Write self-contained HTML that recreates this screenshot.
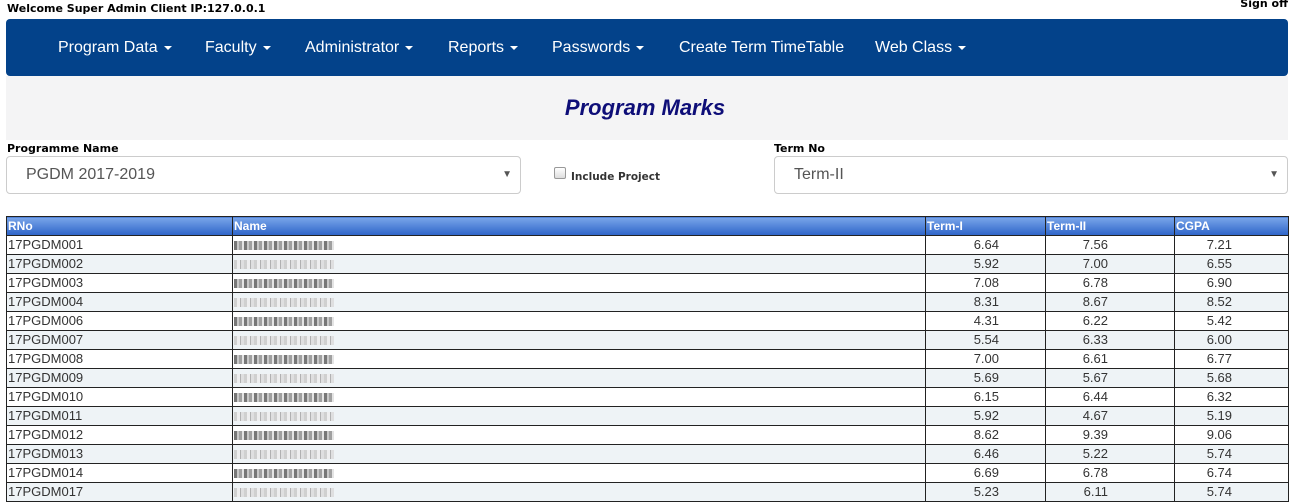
<!DOCTYPE html>
<html><head><meta charset="utf-8"><style>
*{margin:0;padding:0;box-sizing:border-box}
body{width:1296px;height:496px;overflow:hidden;background:#fff;font-family:"Liberation Sans",Arial,sans-serif;position:relative;color:#333}
.abs{position:absolute}
.welcome{left:7px;top:2px;font-family:"DejaVu Sans",sans-serif;font-weight:bold;font-size:11px;color:#000}
.sign{right:8px;top:-3px;font-family:"DejaVu Sans",sans-serif;font-weight:bold;font-size:11px;color:#000}
.nav{left:6px;top:19px;width:1282px;height:57px;background:#03428a;border-radius:4px}
.nav span{position:absolute;top:20px;color:#fff;font-size:16px;white-space:nowrap}
.caret{display:inline-block;width:0;height:0;border-left:4px solid transparent;border-right:4px solid transparent;border-top:4px solid #fff;vertical-align:middle;margin-left:6px}
.band{left:6px;top:76px;width:1282px;height:64px;background:#f4f4f5}
.title{left:0;width:1290px;top:95px;text-align:center;font-size:22px;font-weight:bold;font-style:italic;color:#0e0e78}
.lbl{font-family:"DejaVu Sans",sans-serif;font-weight:bold;font-size:11px;color:#000}
.sel{border:1px solid #ccc;border-radius:4px;height:38px;background:#fff;font-size:16px;color:#555;padding:9px 0 0 19px}
.sel:after{content:"▼";position:absolute;right:8px;top:12px;font-size:10px;color:#555}
table{position:absolute;left:6px;top:216px;border-collapse:collapse;font-size:13px}
td,th{border:1px solid #222;height:19px;padding:0 1px;line-height:16px;overflow:hidden}
th{background:linear-gradient(#7aa6ea,#2d64c8);color:#fff;text-align:left;font-weight:bold;font-size:12px}
tr:nth-child(odd) td{background:#eef3f6}
td.n{text-align:right}
td.a{padding-right:46px}
td.c{padding-right:66px}
td.d{padding-right:56px}
.b{display:inline-block;width:100px;height:9px;vertical-align:middle;background:repeating-linear-gradient(90deg,#555 0 3px,#bbb 3px 5px,#888 5px 8px,#ddd 8px 10px);opacity:.8}
.l{background:repeating-linear-gradient(90deg,#ccc 0 3px,#eee 3px 6px,#aaa 6px 7px,#ddd 7px 10px);opacity:.9}
</style></head><body>
<div class="abs welcome">Welcome Super Admin Client IP:127.0.0.1</div>
<div class="abs sign">Sign off</div>
<div class="abs nav">
<span style="left:52px">Program Data<i class="caret"></i></span>
<span style="left:199px">Faculty<i class="caret"></i></span>
<span style="left:299px">Administrator<i class="caret"></i></span>
<span style="left:442px">Reports<i class="caret"></i></span>
<span style="left:546px">Passwords<i class="caret"></i></span>
<span style="left:673px">Create Term TimeTable</span>
<span style="left:869px">Web Class<i class="caret"></i></span>
</div>
<div class="abs band"></div>
<div class="abs title">Program Marks</div>
<div class="abs lbl" style="left:7px;top:142px">Programme Name</div>
<div class="abs sel" style="left:6px;top:156px;width:515px">PGDM 2017-2019</div>
<div class="abs" style="left:554px;top:167px;width:12px;height:12px;border:1px solid #999;border-radius:2px;background:linear-gradient(#fff,#ddd)"></div>
<div class="abs lbl" style="left:571px;top:171px;font-size:10.5px;color:#333">Include Project</div>
<div class="abs lbl" style="left:774px;top:142px">Term No</div>
<div class="abs sel" style="left:774px;top:156px;width:514px">Term-II</div>
<table>
<tr><th style="width:226px">RNo</th><th style="width:693px">Name</th><th style="width:120px">Term-I</th><th style="width:129px">Term-II</th><th style="width:114px">CGPA</th></tr>
<tr><td>17PGDM001</td><td><i class="b"></i></td><td class="n a">6.64</td><td class="n c">7.56</td><td class="n d">7.21</td></tr>
<tr><td>17PGDM002</td><td><i class="b l"></i></td><td class="n a">5.92</td><td class="n c">7.00</td><td class="n d">6.55</td></tr>
<tr><td>17PGDM003</td><td><i class="b"></i></td><td class="n a">7.08</td><td class="n c">6.78</td><td class="n d">6.90</td></tr>
<tr><td>17PGDM004</td><td><i class="b l"></i></td><td class="n a">8.31</td><td class="n c">8.67</td><td class="n d">8.52</td></tr>
<tr><td>17PGDM006</td><td><i class="b"></i></td><td class="n a">4.31</td><td class="n c">6.22</td><td class="n d">5.42</td></tr>
<tr><td>17PGDM007</td><td><i class="b l"></i></td><td class="n a">5.54</td><td class="n c">6.33</td><td class="n d">6.00</td></tr>
<tr><td>17PGDM008</td><td><i class="b"></i></td><td class="n a">7.00</td><td class="n c">6.61</td><td class="n d">6.77</td></tr>
<tr><td>17PGDM009</td><td><i class="b l"></i></td><td class="n a">5.69</td><td class="n c">5.67</td><td class="n d">5.68</td></tr>
<tr><td>17PGDM010</td><td><i class="b"></i></td><td class="n a">6.15</td><td class="n c">6.44</td><td class="n d">6.32</td></tr>
<tr><td>17PGDM011</td><td><i class="b l"></i></td><td class="n a">5.92</td><td class="n c">4.67</td><td class="n d">5.19</td></tr>
<tr><td>17PGDM012</td><td><i class="b"></i></td><td class="n a">8.62</td><td class="n c">9.39</td><td class="n d">9.06</td></tr>
<tr><td>17PGDM013</td><td><i class="b l"></i></td><td class="n a">6.46</td><td class="n c">5.22</td><td class="n d">5.74</td></tr>
<tr><td>17PGDM014</td><td><i class="b"></i></td><td class="n a">6.69</td><td class="n c">6.78</td><td class="n d">6.74</td></tr>
<tr><td>17PGDM017</td><td><i class="b l"></i></td><td class="n a">5.23</td><td class="n c">6.11</td><td class="n d">5.74</td></tr>
</table>
</body></html>
